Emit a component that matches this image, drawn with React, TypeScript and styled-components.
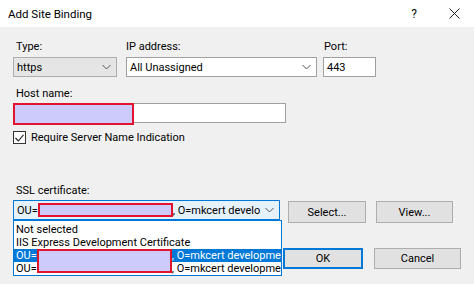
import React from "react";
import styled, { createGlobalStyle } from "styled-components";

const GlobalStyle = createGlobalStyle`
  html, body { margin: 0; padding: 0; background: #f0f0f0; }
  body {
    font-family: Roboto, "Noto Sans", "Liberation Sans", sans-serif;
    font-size: 11px;
    color: #000;
  }
  * { box-sizing: border-box; }
`;

const Window = styled.div`
  width: 474px;
  height: 284px;
  overflow: hidden;
  background: #f0f0f0;
  display: flex;
  flex-direction: column;
`;

const TitleBar = styled.div`
  height: 27px;
  flex: none;
  background: #fff;
  display: flex;
  align-items: center;
  padding-left: 8px;
`;

const Title = styled.div`
  flex: 1;
  font-size: 11.5px;
`;

const TitleButton = styled.div`
  width: 40px;
  height: 27px;
  display: flex;
  align-items: center;
  justify-content: center;
  font-size: 12px;
  color: #111;
`;

const Body = styled.div`
  padding: 12px 0 0 13px;
  display: flex;
  flex-direction: column;
`;

const Row = styled.div`
  display: flex;
  align-items: flex-start;
`;

const Field = styled.div<{ $gap?: number }>`
  display: flex;
  flex-direction: column;
  margin-right: ${(p) => p.$gap ?? 0}px;
`;

const Label = styled.div<{ $indent?: number; $top?: number; $bottom?: number }>`
  height: 16px;
  line-height: 16px;
  padding-left: ${(p) => p.$indent ?? 3}px;
  margin-top: ${(p) => p.$top ?? 0}px;
  margin-bottom: ${(p) => p.$bottom ?? 2}px;
  white-space: nowrap;
`;

const Select = styled.div<{ $w: number; $grey?: boolean }>`
  width: ${(p) => p.$w}px;
  height: 20px;
  border: 1px solid ${(p) => (p.$grey ? "#adadad" : "#a0a0a0")};
  background: ${(p) => (p.$grey ? "#e5e5e5" : "#fff")};
  display: flex;
  align-items: center;
  padding: 0 5px 0 3px;
  white-space: nowrap;
  overflow: hidden;
`;

const SelectText = styled.span`
  flex: 1;
  min-width: 0;
  overflow: hidden;
  display: flex;
  align-items: center;
`;

const TextInput = styled.div<{ $w: number }>`
  width: ${(p) => p.$w}px;
  height: 20px;
  border: 1px solid #a0a0a0;
  background: #fff;
  display: flex;
  align-items: center;
  padding-left: 3px;
  position: relative;
`;

const Redact = styled.span<{ $w: number; $h: number }>`
  display: inline-block;
  flex: none;
  width: ${(p) => p.$w}px;
  height: ${(p) => p.$h}px;
  background: #cdcbfb;
  border: 2px solid #e2132c;
`;

const HostRedact = styled(Redact)`
  position: absolute;
  left: -1px;
  top: -1px;
`;

const CheckRow = styled.div`
  display: flex;
  align-items: center;
  margin-top: 8px;
  height: 13px;
  gap: 5px;
`;

const CheckBox = styled.div`
  width: 13px;
  height: 13px;
  border: 1px solid #333;
  background: #fff;
  display: flex;
  align-items: center;
  justify-content: center;
`;

const SslRow = styled.div`
  display: flex;
  align-items: flex-start;
`;

const SslWrap = styled.div`
  position: relative;
  margin-right: 8px;
`;

const SslSelect = styled(Select)`
  border-color: #0078d7;
  background: #e5f1fb;
`;

const Button = styled.div<{ $w: number; $gap?: number; $default?: boolean }>`
  width: ${(p) => p.$w}px;
  height: ${(p) => (p.$default !== undefined ? 21 : 22)}px;
  margin-left: ${(p) => p.$gap ?? 0}px;
  margin-top: ${(p) => (p.$default !== undefined ? 0 : 1)}px;
  border: ${(p) => (p.$default ? "2px solid #0078d7" : "1px solid #adadad")};
  background: #e1e1e1;
  display: flex;
  align-items: center;
  justify-content: center;
`;

const Footer = styled.div`
  display: flex;
  justify-content: flex-end;
  padding-right: 13px;
  margin-top: 25px;
`;

const DropList = styled.div`
  position: absolute;
  top: 20px;
  left: 0;
  width: 269px;
  height: 56px;
  background: #fff;
  border: 1px solid #0078d7;
  padding-top: 2px;
  z-index: 2;
  overflow: hidden;
`;

const Item = styled.div<{ $selected?: boolean }>`
  height: 13px;
  line-height: 13px;
  padding-left: 2px;
  white-space: nowrap;
  overflow: hidden;
  display: flex;
  align-items: center;
  background: ${(p) => (p.$selected ? "#0078d7" : "transparent")};
  color: ${(p) => (p.$selected ? "#fff" : "#000")};
`;

const Spacer = styled.span<{ $w: number }>`
  display: inline-block;
  flex: none;
  width: ${(p) => p.$w}px;
`;

const ListRedact = styled(Redact)`
  position: absolute;
  left: 23px;
  top: 28px;
`;

const Chevron = () => (
  <svg width="9" height="6" viewBox="0 0 9 6" style={{ flex: "none" }}>
    <path d="M0.5 1 L4.5 5 L8.5 1" fill="none" stroke="#555" strokeWidth="1" />
  </svg>
);

export default function App() {
  return (
    <>
      <GlobalStyle />
      <Window>
        <TitleBar>
          <Title>Add Site Binding</Title>
          <TitleButton>?</TitleButton>
          <TitleButton>
            <svg width="11" height="11" viewBox="0 0 11 11">
              <path d="M0.5 0.5 L10.5 10.5 M10.5 0.5 L0.5 10.5" stroke="#222" strokeWidth="1" />
            </svg>
          </TitleButton>
        </TitleBar>
        <Body>
          <Row>
            <Field $gap={9}>
              <Label>Type:</Label>
              <Select $w={104} $grey>
                <SelectText>https</SelectText>
                <Chevron />
              </Select>
            </Field>
            <Field $gap={6}>
              <Label $indent={0}>IP address:</Label>
              <Select $w={191}>
                <SelectText>All Unassigned</SelectText>
                <Chevron />
              </Select>
            </Field>
            <Field>
              <Label $indent={1}>Port:</Label>
              <TextInput $w={53}>443</TextInput>
            </Field>
          </Row>

          <Label $top={9} $bottom={1}>Host name:</Label>
          <TextInput $w={273}>
            <HostRedact $w={121} $h={22} />
          </TextInput>

          <CheckRow>
            <CheckBox>
              <svg width="9" height="8" viewBox="0 0 9 8">
                <path d="M0.5 4 L3.3 7 L8.5 0.8" fill="none" stroke="#222" strokeWidth="1.1" />
              </svg>
            </CheckBox>
            <span>Require Server Name Indication</span>
          </CheckRow>

          <Label $top={39} $bottom={1}>SSL certificate:</Label>
          <SslRow>
            <SslWrap>
              <SslSelect $w={267}>
                <SelectText>
                  OU=
                  <Redact $w={135} $h={14} />
                  , O=mkcert develo
                </SelectText>
                <Chevron />
              </SslSelect>
              <DropList>
                <Item>Not selected</Item>
                <Item>IIS Express Development Certificate</Item>
                <Item $selected>
                  OU=<Spacer $w={135} />, O=mkcert development
                </Item>
                <Item>
                  OU=<Spacer $w={135} />, O=mkcert development
                </Item>
                <ListRedact $w={135} $h={24} />
              </DropList>
            </SslWrap>
            <Button $w={78}>Select...</Button>
            <Button $w={77} $gap={10}>View...</Button>
          </SslRow>

          <Footer>
            <Button $w={80} $default>OK</Button>
            <Button $w={87} $gap={11} $default={false}>Cancel</Button>
          </Footer>
        </Body>
      </Window>
    </>
  );
}
